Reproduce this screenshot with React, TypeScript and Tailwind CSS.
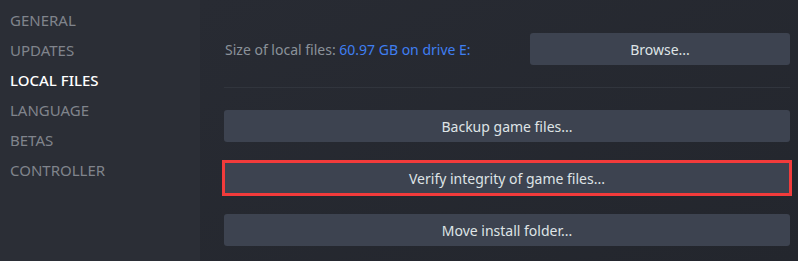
import React from 'react';

const tabs = ['General', 'Updates', 'Local Files', 'Language', 'Betas', 'Controller'];

function ActionButton({ label, highlight }: { label: string; highlight?: boolean }) {
  return (
    <button
      className={`h-8 w-full bg-[#3d4350] text-[14px] text-[#dfe3e6] ${
        highlight
          ? 'rounded-none outline-[3px] outline-solid outline-[#f23b3b] -outline-offset-1'
          : 'rounded-[3px]'
      }`}
    >
      {label}
    </button>
  );
}

export default function App() {
  return (
    <div
      className="flex h-[261px] w-[798px] overflow-hidden"
      style={{ fontFamily: '"Noto Sans", "Open Sans", sans-serif' }}
    >
      {/* Sidebar */}
      <nav className="flex w-[200px] shrink-0 flex-col bg-[#2b2e36] pt-[5px]">
        {tabs.map((tab) => (
          <div
            key={tab}
            className={`flex h-[30px] items-center pl-[10px] text-[15px] uppercase ${
              tab === 'Local Files' ? 'font-medium text-white' : 'text-[#80848c]'
            }`}
          >
            {tab}
          </div>
        ))}
      </nav>

      {/* Content */}
      <main className="flex flex-1 flex-col bg-gradient-to-br from-[#282b33] to-[#23262d] pl-[24px] pr-[8px] pt-[33px]">
        <div className="flex h-8 items-center justify-between">
          <span className="pl-px text-[14px] text-[#8b929a]">
            Size of local files: <span className="text-[#3f7ff2]">60.97 GB on drive E:</span>
          </span>
          <button className="h-8 w-[260px] rounded-[3px] bg-[#3d4350] text-[14px] text-[#dfe3e6]">
            Browse...
          </button>
        </div>

        <div className="mt-[22px] h-px bg-[#31353d]" />

        <div className="mt-[22px] flex flex-col gap-5">
          <ActionButton label="Backup game files..." />
          <ActionButton label="Verify integrity of game files..." highlight />
          <ActionButton label="Move install folder..." />
        </div>
      </main>
    </div>
  );
}
